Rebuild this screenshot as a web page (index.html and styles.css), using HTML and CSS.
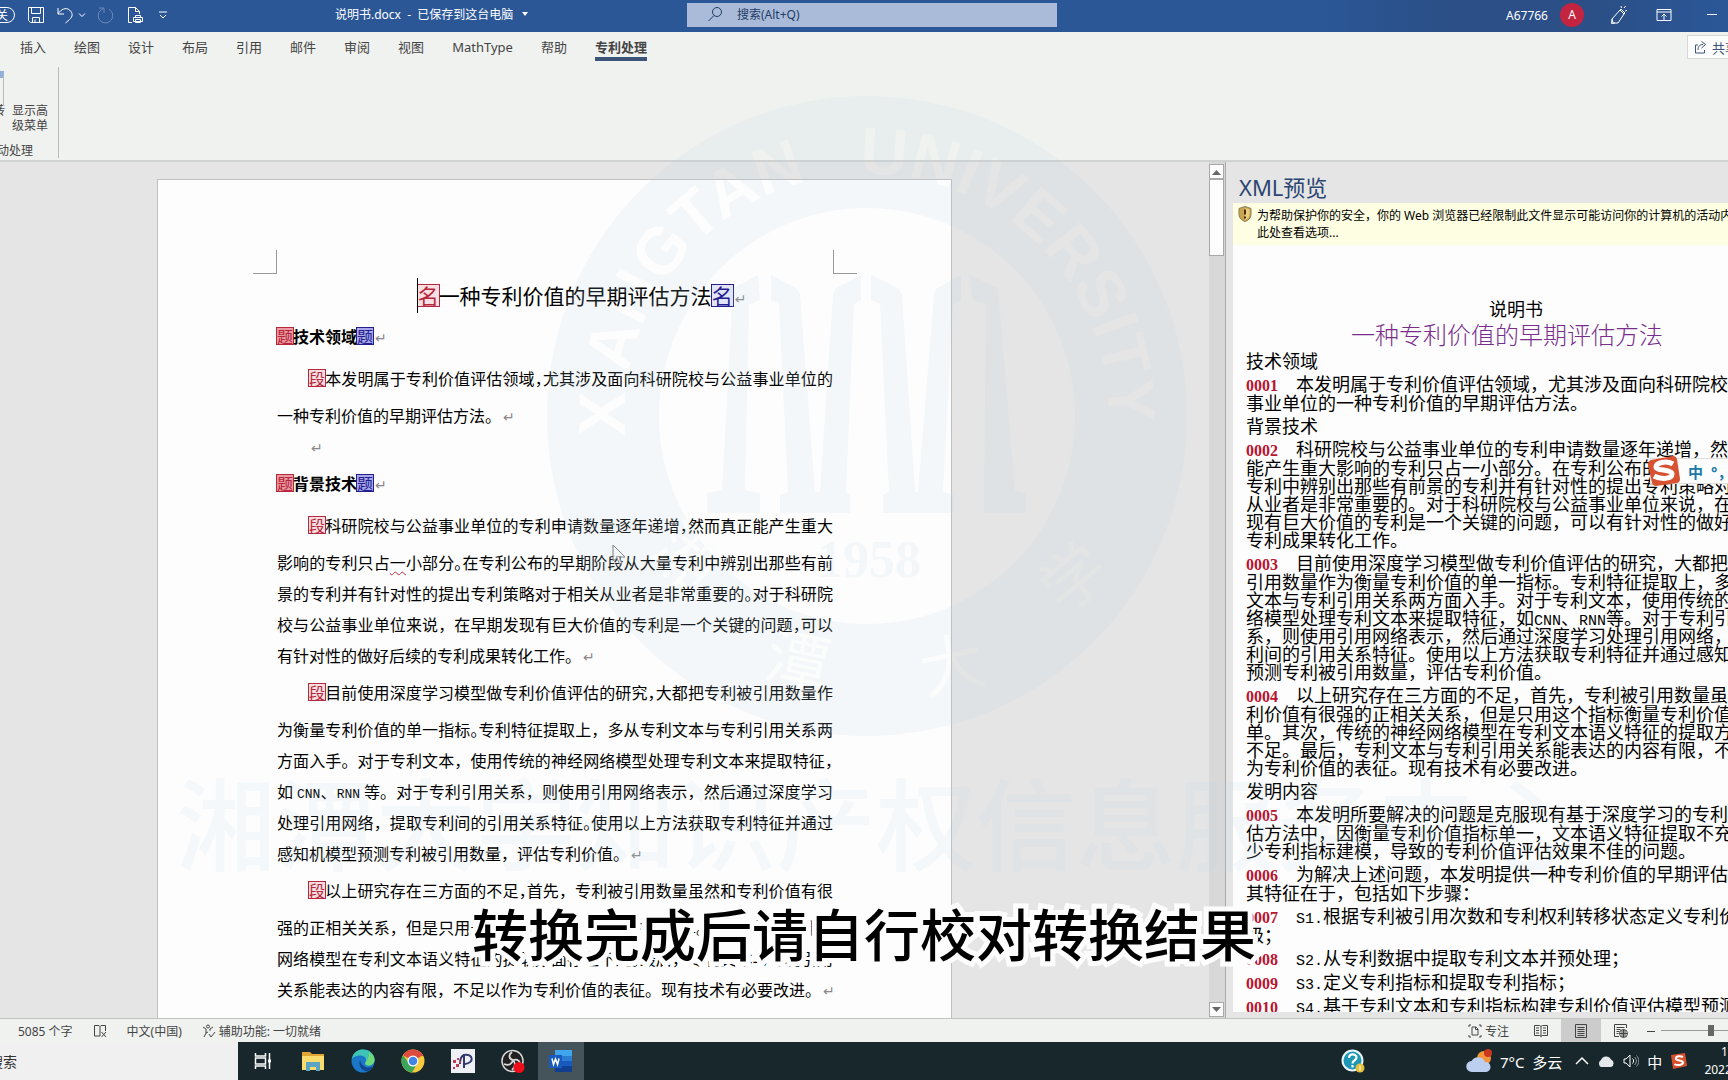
FILE: index.html
```
<!DOCTYPE html>
<html lang="zh-CN">
<head>
    <meta charset="UTF-8">
    <meta name="viewport" content="width=device-width, initial-scale=1">
    <title>说明书.docx - Word</title>
    <link rel="stylesheet" href="styles.css">
</head>
<body>
    <header class="titlebar">
        <div class="quick">
            <button class="autosave">关</button>
            <button aria-label="保存"><svg width="18" height="18" viewBox="0 0 18 18"><path d="M1.5 1.5h15v15h-13l-2-2zM4.500 1.500v6h9v-6M5.500 16.500v-5h7v5M8 16.500v-3"/></svg></button>
            <button class="undo" aria-label="撤消"><svg width="18" height="18" viewBox="0 0 18 18"><path d="M2 2v6h6M2 8c3-5 8-7 11.500-4s3.500 6.500 0 9.500l-4 3.500"/></svg></button>
            <button class="caret" aria-label="撤消列表"><svg width="8" height="8" viewBox="0 0 8 8"><path d="M1 2.500l3 3 3-3"/></svg></button>
            <button class="redo" aria-label="重复"><svg width="18" height="18" viewBox="0 0 18 18"><path d="M3 2h5v5M7.500 2.500C1 5 .5 13 6 16s12-2 10.500-8c-.5-2-1.500-3.500-3.500-5"/></svg></button>
            <button aria-label="打印预览"><svg width="18" height="18" viewBox="0 0 18 18"><path d="M6 16.500H2.500v-15h7l4 4V8M9.500 1.500v4h4M7.500 11.500h9v4h-9zM9.500 11.500v-2h5v2M9.500 13.500h5v3h-5z"/></svg></button>
            <button class="more" aria-label="自定义快速访问工具栏"><svg width="10" height="10" viewBox="0 0 10 10"><path d="M1 2h8M2 5l3 3 3-3"/></svg></button>
        </div>
        <div class="doc-name">说明书.docx&nbsp; -&nbsp; 已保存到这台电脑 <svg width="8" height="6" viewBox="0 0 8 6"><path class="solid" d="M1 1h6L4 5z"/></svg></div>
        <label class="search">
            <svg width="16" height="16" viewBox="0 0 16 16"><circle cx="10" cy="6" r="4.500"/><path d="M7 9.500L1.500 15"/></svg>
            <input type="text" placeholder="搜索(Alt+Q)" aria-label="搜索">
        </label>
        <div class="account">
            <span>A67766</span>
            <span class="avatar">A</span>
            <button aria-label="墨迹"><svg width="18" height="20" viewBox="0 0 18 20"><path d="M2 14L10 5l4 4-6 9H3zM2 14l-.5 4.500L5 18M10 5l1-1 4 4-1 1M11 1l.5 2M14 3l1.500-2M15 6l2-.5"/></svg></button>
            <button aria-label="功能区显示选项"><svg width="16" height="14" viewBox="0 0 16 14"><path d="M1 1.500h14v11H1zM1 4h14M8 12V6.500M5.500 8.500L8 6l2.500 2.500"/></svg></button>
            <button aria-label="最小化"><svg width="12" height="12" viewBox="0 0 12 12"><path d="M1 5.500h10"/></svg></button>
        </div>
    </header>

    <section class="ribbon">
        <nav class="tabs">
            <button>插入</button>
            <button>绘图</button>
            <button>设计</button>
            <button>布局</button>
            <button>引用</button>
            <button>邮件</button>
            <button>审阅</button>
            <button>视图</button>
            <button>MathType</button>
            <button>帮助</button>
            <button class="active">专利处理</button>
            <button class="share"><svg width="14" height="14" viewBox="0 0 14 14"><path d="M4 5H1.500v8h9v-3M4 10c0-4 2-5.500 5-5.500M7.500 1.500l4 3-4 3.500"/></svg>共享</button>
        </nav>
        <div class="group">
            <div class="group-buttons">
                <button class="cut">一键转<br>换…</button>
                <button>显示高<br>级菜单</button>
            </div>
            <div class="group-name">自动处理</div>
        </div>
    </section>

    <main class="workspace">
        <div class="canvas">
            <article class="page">
                <i class="corner left"></i><i class="corner right"></i>
                <h1><span class="tag open">名</span>一种专利价值的早期评估方法<span class="tag close">名</span><span class="ret">↵</span></h1>
                <h2><span class="tag open fill">题</span>技术领域<span class="tag close fill">题</span><span class="ret">↵</span></h2>
                <p>
                    <span><b class="tag open">段</b>本发明属于专利价值评估领域<i>，</i>尤其涉及面向科研院校与公益事业单位的</span>
                    <span>一种专利价值的早期评估方法。<b class="ret">↵</b></span>
                </p>
                <p class="empty"><b class="ret">↵</b></p>
                <h2><span class="tag open fill">题</span>背景技术<span class="tag close fill">题</span><span class="ret">↵</span></h2>
                <p>
                    <span><b class="tag open">段</b>科研院校与公益事业单位的专利申请数量逐年递增<i>，</i>然而真正能产生重大</span>
                    <span>影响的专利只占<u>一</u>小部分<i>。</i>在专利公布的早期阶段从大量专利中辨别出那些有前</span>
                    <span>景的专利并有针对性的提出专利策略对于相关从业者是非常重要的<i>。</i>对于科研院</span>
                    <span>校与公益事业单位来说，在早期发现有巨大价值的专利是一个关键的问题<i>，</i>可以</span>
                    <span>有针对性的做好后续的专利成果转化工作。<b class="ret">↵</b></span>
                </p>
                <p>
                    <span><b class="tag open">段</b>目前使用深度学习模型做专利价值评估的研究<i>，</i>大都把专利被引用数量作</span>
                    <span>为衡量专利价值的单一指标<i>。</i>专利特征提取上，多从专利文本与专利引用关系两</span>
                    <span>方面入手。对于专利文本，使用传统的神经网络模型处理专利文本来提取特征<i>，</i></span>
                    <span>如 <em>CNN</em>、<em>RNN</em> 等。对于专利引用关系，则使用引用网络表示，然后通过深度学习</span>
                    <span>处理引用网络，提取专利间的引用关系特征<i>。</i>使用以上方法获取专利特征并通过</span>
                    <span>感知机模型预测专利被引用数量，评估专利价值。<b class="ret">↵</b></span>
                </p>
                <p>
                    <span><b class="tag open">段</b>以上研究存在三方面的不足<i>，</i>首先，专利被引用数量虽然和专利价值有很</span>
                    <span>强的正相关关系，但是只用这个指标衡量专利价值过于简单<i>。</i>其次，传统的神经</span>
                    <span>网络模型在专利文本语义特征的提取方面存在不足<i>。</i>最后，专利文本与专利引用</span>
                    <span>关系能表达的内容有限，不足以作为专利价值的表征。现有技术有必要改进。<b class="ret">↵</b></span>
                </p>
                <p class="empty"><b class="ret">↵</b></p>
            </article>
        </div>
        <div class="scrollbar">
            <button aria-label="向上滚动"><svg width="9" height="6" viewBox="0 0 9 6"><path d="M0 6l4.500-5L9 6z"/></svg></button>
            <div class="thumb"></div>
            <button class="down" aria-label="向下滚动"><svg width="9" height="6" viewBox="0 0 9 6"><path d="M0 0l4.500 5L9 0z"/></svg></button>
        </div>
        <aside class="preview">
            <h2>XML预览</h2>
            <div class="preview-box">
                <div class="warning">
                    <svg width="14" height="16" viewBox="0 0 14 16"><path d="M7 .5l6 2v6c0 3.500-3 6-6 7-3-1-6-3.500-6-7v-6z" fill="#c9a552" stroke="#8b7a55"/><path d="M7 2l4.500 1.500V8c0 3-2 5-4.500 6z" fill="#e9cf7c"/><path d="M7 3.500v5M7 10.500v2" stroke="#4a2c0c" stroke-width="2"/></svg>
                    <div>为帮助保护你的安全，你的 Web 浏览器已经限制此文件显示可能访问你的计算机的活动内容。单击<br>此处查看选项...</div>
                </div>
                <div class="xml">
                    <h3>说明书</h3>
                    <h4>一种专利价值的早期评估方法</h4>
                    <h5>技术领域</h5>
                    <p><b>0001</b>　本发明属于专利价值评估领域，尤其涉及面向科研院校与公益<br>事业单位的一种专利价值的早期评估方法。</p>
                    <h5>背景技术</h5>
                    <p><b>0002</b>　科研院校与公益事业单位的专利申请数量逐年递增，然而真正<br>能产生重大影响的专利只占一小部分。在专利公布的早期阶段从大量<br>专利中辨别出那些有前景的专利并有针对性的提出专利策略对于相关<br>从业者是非常重要的。对于科研院校与公益事业单位来说，在早期发<br>现有巨大价值的专利是一个关键的问题，可以有针对性的做好后续的<br>专利成果转化工作。</p>
                    <p><b>0003</b>　目前使用深度学习模型做专利价值评估的研究，大都把专利被<br>引用数量作为衡量专利价值的单一指标。专利特征提取上，多从专利<br>文本与专利引用关系两方面入手。对于专利文本，使用传统的神经网<br>络模型处理专利文本来提取特征，如<em>CNN</em>、<em>RNN</em>等。对于专利引用关<br>系，则使用引用网络表示，然后通过深度学习处理引用网络，提取专<br>利间的引用关系特征。使用以上方法获取专利特征并通过感知机模型<br>预测专利被引用数量，评估专利价值。</p>
                    <p><b>0004</b>　以上研究存在三方面的不足，首先，专利被引用数量虽然和专<br>利价值有很强的正相关关系，但是只用这个指标衡量专利价值过于简<br>单。其次，传统的神经网络模型在专利文本语义特征的提取方面存在<br>不足。最后，专利文本与专利引用关系能表达的内容有限，不足以作<br>为专利价值的表征。现有技术有必要改进。</p>
                    <h5>发明内容</h5>
                    <p><b>0005</b>　本发明所要解决的问题是克服现有基于深度学习的专利价值评<br>估方法中，因衡量专利价值指标单一，文本语义特征提取不充分，缺<br>少专利指标建模，导致的专利价值评估效果不佳的问题。</p>
                    <p><b>0006</b>　为解决上述问题，本发明提供一种专利价值的早期评估方法，<br>其特征在于，包括如下步骤：</p>
                    <p><b>0007</b>　<em>S1.</em>根据专利被引用次数和专利权利转移状态定义专利价值等<br>级；</p>
                    <p><b>0008</b>　<em>S2.</em>从专利数据中提取专利文本并预处理；</p>
                    <p><b>0009</b>　<em>S3.</em>定义专利指标和提取专利指标；</p>
                    <p><b>0010</b>　<em>S4.</em>基于专利文本和专利指标构建专利价值评估模型预测</p>
                </div>
            </div>
        </aside>
    </main>

    <footer class="status">
        <span>5085 个字</span>
        <button aria-label="校对"><svg width="14" height="14" viewBox="0 0 14 14"><path d="M7 12H1.500V1.500H6l1 1 1-1h4.500V7M7 2.500V12M8.500 8l4.500 5M13 8l-4.500 5"/></svg></button>
        <span>中文(中国)</span>
        <button class="access"><svg width="14" height="14" viewBox="0 0 14 14"><circle cx="6" cy="2.500" r="1.500"/><path d="M1 3l3 2v4l-2 4M11 3L8 5v2M4 9l2-1M7 10l2 3 4-5"/></svg>辅助功能: 一切就绪</button>
        <div class="views">
            <button class="focus"><svg width="14" height="14" viewBox="0 0 14 14"><path d="M3 1H1v2M11 1h2v2M3 13H1v-2M11 13h2v-2M4 3h4l2 2v6H4zM7.500 3v2.500H10"/></svg>专注</button>
            <button aria-label="阅读视图"><svg width="14" height="14" viewBox="0 0 14 14"><path d="M7 2.500L5.500 1.500h-5v10h5l1.500 1 1.500-1h5v-10h-5zM7 2.500v10M2 4h3M2 6.500h3M2 9h3M9 4h3M9 6.500h3M9 9h3"/></svg></button>
            <button class="on" aria-label="页面视图"><svg width="12" height="14" viewBox="0 0 12 14"><path d="M.5.5h11v13H.5zM2.500 3.500h7M2.500 5.500h7M2.500 7.500h7M2.500 9.500h7M2.500 11.500h7"/></svg></button>
            <button aria-label="Web 版式视图"><svg width="14" height="14" viewBox="0 0 14 14"><path d="M5 12.500H.5V.5h12V4M2.500 3.500h8M2.500 5.500h4M2.500 7.500h3M2.500 9.500h2"/><circle cx="9.500" cy="9.500" r="4"/><path d="M5.500 9.500h8M9.500 5.500v8M8 6v7M11 6v7"/></svg></button>
            <button class="minus" aria-label="缩小"><svg width="10" height="10" viewBox="0 0 10 10"><path d="M1 5.500h8"/></svg></button>
            <input type="range" value="50" aria-label="缩放">
        </div>
    </footer>

    <div class="taskbar">
        <label class="task-search"><input type="text" placeholder="搜索" aria-label="在这里搜索"></label>
        <button aria-label="任务视图"><svg width="18" height="18" viewBox="0 0 18 18" fill="none" stroke="#fff" stroke-width="1.500"><path d="M1.500 1v3h10V1M1.500 17v-3h10v3M1.500 6h10v6h-10zM15.500 1v16"/><path d="M14 7.500h3v3h-3z" fill="#fff" stroke="none"/></svg></button>
        <button aria-label="文件资源管理器"><svg width="24" height="24" viewBox="0 0 24 24"><path d="M1 3h8l2 2h12v16H1z" fill="#e0a634"/><path d="M1 7h22v14H1z" fill="#fadc6e"/><path d="M5 22v-9h14v9h-4v-4H9v4z" fill="#5aa5c4"/></svg></button>
        <button aria-label="Edge"><svg width="24" height="24" viewBox="0 0 24 24"><circle cx="12" cy="12" r="11.500" fill="#1b78c8"/><path d="M1 10C2 3 7 .5 12 .5c7 0 11.500 5 11.500 10 0 4-3 6-6 6-3 0-4-1.500-3-3 2-4-1-7-5-7-4 0-7.500 1.500-8.500 3.500z" fill="#3fc3b4"/><path d="M18 3c4 2.500 5.500 5 5.500 8 0 3.500-3 5.500-6 5.500-3 0-4-1.500-3-3 3-4 4-7 3.500-10.500z" fill="#6fd879"/><path d="M9 11c-2 5 1 10.500 7 11.500 3-1 5-3 6-5-5 2.500-11 1-13-6.500z" fill="#12478f"/></svg></button>
        <button aria-label="Chrome"><svg width="24" height="24" viewBox="0 0 24 24"><circle cx="12" cy="12" r="11.500" fill="#f8ca3c"/><path d="M12 12L2 6.200A11.500 11.500 0 0 1 22 6.300z" fill="#dd4b3e"/><path d="M2 6.200A11.500 11.500 0 0 0 11 23.500l5.500-9.500H8z" fill="#3ba55b"/><path d="M12 6.500h10" stroke="#dd4b3e" stroke-width="1"/><circle cx="12" cy="12" r="5.500" fill="#fff"/><circle cx="12" cy="12" r="4.300" fill="#4285e4"/></svg></button>
        <button aria-label="专利工具"><svg width="24" height="24" viewBox="0 0 24 24"><path fill="#eef0f4" d="M0 0h24v24H0z"/><path d="M13 19V6c9-2 11 8 1 9M13 6c-3 1-4 5-4 9" fill="none" stroke="#343a70" stroke-width="2"/><path d="M2 11h3v3H2zM6 9h2v2H6zM5 15h3v3H5zM2 18h2v2H2zM8 12h2v2H8z" fill="#c33a58"/></svg></button>
        <button aria-label="OBS"><svg width="24" height="24" viewBox="0 0 24 24"><circle cx="11.500" cy="12" r="10.500" fill="#211f21" stroke="#d8d8d8" stroke-width="1.500"/><path d="M11 3c-4 3-3 7 1 8 3-1 6-.5 7 3M12 11c-1 4-4 6-9 4M12 11c3 3 2 7-1 10" fill="none" stroke="#d8d8d8" stroke-width="1.800"/><circle cx="18" cy="18.500" r="5.500" fill="#f00d18"/></svg></button>
        <button class="running" aria-label="Word"><svg width="24" height="24" viewBox="0 0 24 24"><path fill="#41a5ee" d="M6 1h17v6H6z"/><path fill="#2b7cd3" d="M6 7h17v6H6z"/><path fill="#185abd" d="M6 12h17v6H6z"/><path fill="#103f91" d="M6 17h17v6H6z"/><path fill="#185abd" d="M0 6h13v13H0z"/><path d="M3 9.500l1.500 6L6.500 10l2 5.500 1.500-6" fill="none" stroke="#fff" stroke-width="1.500"/></svg></button>
        <div class="tray">
            <button class="help" aria-label="帮助"><svg width="24" height="24" viewBox="0 0 24 24"><circle cx="11.500" cy="11.500" r="10" fill="#1d97b5" stroke="#e8f6fa" stroke-width="2"/><path d="M8 9c0-5 7.500-4.500 7.500-.5 0 3-4 2.500-4 6M11.500 16v2.500" fill="none" stroke="#fff" stroke-width="2.200"/><circle cx="19" cy="19" r="4.500" fill="#e5c03f"/><path d="M19 16.500v5" stroke="#fff"/></svg></button>
            <svg width="26" height="24" viewBox="0 0 26 24"><circle cx="18" cy="9" r="7" fill="#f3963c"/><circle cx="22" cy="4" r="4" fill="#c9371f"/><path d="M6 23a5.500 5.500 0 0 1-.5-11A7.500 7.500 0 0 1 19 13a5 5 0 0 1 1 10z" fill="#bccff0"/></svg>
            <span class="weather">7°C&nbsp; 多云</span>
            <svg width="14" height="14" viewBox="0 0 14 14" fill="none" stroke="#fff" stroke-width="1.500"><path d="M1 10l6-6 6 6"/></svg>
            <svg width="18" height="14" viewBox="0 0 18 14"><path d="M4 13a4 4 0 0 1 0-7 5.500 5.500 0 0 1 10-.5A4 4 0 0 1 14 13z" fill="#e4e8ea"/></svg>
            <svg width="16" height="14" viewBox="0 0 16 14" fill="none" stroke="#fff"><path d="M1 5h2l4-4v12L3 9H1zM9.500 4.500c1.500 1.500 1.500 3.500 0 5"/><path d="M11.500 3c2.500 2.500 2.500 5.500 0 8M13.500 1.500c3 3 3 8 0 11" stroke="#8b989c"/></svg>
            <span>中</span>
            <svg width="18" height="16" viewBox="0 0 18 16"><path d="M1 2l14-2 2 13-14 3z" fill="#d9502c"/><path d="M13 4C9 2 5 4 6 6s7 1 7 3.500S7 13 4.500 11" fill="none" stroke="#fff" stroke-width="2"/></svg>
            <div class="clock">17:36<br>2022/11/30</div>
        </div>
    </div>

    <!-- input method bar -->
    <div class="ime">
        <svg width="32" height="30" viewBox="0 0 32 30"><path d="M3 4L25 0q3 0 4 3l3 20q0 3-3 4L8 30q-3 0-4-3L0 8q0-3 3-4z" fill="#d65231"/><path d="M25 8C18 4 8 7 8 11s16 2 16 7-11 6-18 2" fill="none" stroke="#fff" stroke-width="5"/></svg>
        <span>中</span><span>°，</span>
    </div>

    <svg class="pointer" width="14" height="22" viewBox="0 0 14 22"><path d="M1 1v16l4-3 2.500 6 2.500-1-2.500-6H13z" fill="#fff" fill-opacity=".6" stroke="#777"/></svg>

    <!-- university watermark -->
    <svg class="seal" width="640" height="640" viewBox="547 96 640 640" aria-hidden="true">
        <defs>
            <path id="arc" d="M867 658a242 242 0 0 1 0-484a242 242 0 0 1 0 484"/>
            <mask id="letters" maskUnits="userSpaceOnUse" x="547" y="96" width="640" height="640">
                <path fill="#fff" d="M547 96h640v640H547z"/>
                <circle cx="867" cy="416" r="208" fill="#000"/>
                <g class="seal-name">
                    <text><textPath href="#arc" startOffset="530">XIANGTAN</textPath></text>
                    <text><textPath href="#arc" startOffset="950">UNIVERSITY</textPath></text>
                </g>
                <g class="seal-cn">
                    <text transform="translate(683 560) rotate(40)" y="20">湘</text>
                    <text transform="translate(797 664) rotate(12)" y="20">潭</text>
                    <text transform="translate(953 668) rotate(-12)" y="20">大</text>
                    <text transform="translate(1076 580) rotate(-40)" y="20">学</text>
                </g>
            </mask>
        </defs>
        <circle cx="867" cy="416" r="320" mask="url(#letters)"/>
        <path d="M758 275L733 288 722 490 707 493V513H760V493L745 490 749 305 760 300zM771 275L796 288 800 294 815 492H820L833 294 836 288 861 275V300L854 304 846 492 850 495V513H780V495L788 492 779 304 771 300zM871 275L898 288 902 294 915 492H918L934 294 937 288 961 275V300L953 304 943 492 954 495V513H883V495L889 492 880 304 871 300zM969 275L998 288 1015 491 1026 493V513H984V493L986 304 973 300z"/>
        <text class="seal-year" x="869" y="577">1958</text>
    </svg>
    <div class="watermark">湘潭大学知识产权信息服务中心</div>
    <div class="subtitle">转换完成后请自行校对转换结果</div>
</body>
</html>
```
FILE: styles.css
```
* {
    box-sizing: border-box;
}

body {
    margin: 0;
    height: 100vh;
    display: flex;
    flex-direction: column;
    overflow: hidden;
    position: relative;
    background: #e5e5e5;
    font-family: "Noto Sans", "Noto Sans CJK SC", sans-serif;
    font-size: 12px;
    color: #444;
}

button {
    display: flex;
    align-items: center;
    padding: 0;
    border: none;
    background: none;
    font: inherit;
    color: inherit;
    flex-shrink: 0;
}

input {
    font: inherit;
    border: none;
    background: none;
    padding: 0;
    margin: 0;
}

svg {
    display: block;
    flex-shrink: 0;
}

h1, h2, h3, h4, h5, p {
    margin: 0;
    font-weight: 400;
}

/* title bar */
.titlebar {
    height: 32px;
    display: flex;
    align-items: center;
    flex-shrink: 0;
    background: linear-gradient(90deg, #2b5797 76%, #2b4f86 84%, #2b4f86 92%, #2b5797);
    color: #fff;
    white-space: nowrap;
}

.titlebar svg,
.tabs svg,
.status svg {
    fill: none;
    stroke: currentColor;
}

.titlebar svg .solid {
    fill: currentColor;
    stroke: none;
}

.quick {
    display: flex;
    align-items: center;
    width: 335px;
    height: 30px;
    padding-bottom: 2px;
}

.quick button {
    margin-right: 14px;
}

.quick .autosave {
    width: 40px;
    height: 16px;
    margin-left: -25px;
    margin-right: 12px;
    padding-right: 6px;
    justify-content: flex-end;
    border: 1px solid #fff;
    border-radius: 8px;
}

.quick .undo {
    margin-right: 4px;
    margin-left: -3px;
}

.quick .caret {
    margin-right: 10px;
}

.quick .redo {
    margin-right: 12px;
    opacity: .3;
}

.doc-name {
    display: flex;
    align-items: center;
    gap: 8px;
    width: 352px;
    height: 30px;
    padding-bottom: 4px;
}

.search {
    display: flex;
    align-items: center;
    gap: 14px;
    flex: 0 1 370px;
    height: 24px;
    margin-bottom: 2px;
    padding: 0 0 2px 20px;
    background: #a9bbd8;
    color: #1f3c66;
}

.search input {
    flex: 1;
}

.search input::placeholder {
    color: #1f3c66;
}

.account {
    display: flex;
    align-items: center;
    margin-left: auto;
    padding: 0 10px 2px 0;
    height: 30px;
}

.avatar {
    width: 24px;
    height: 24px;
    margin: 0 26px 0 12px;
    border-radius: 50%;
    background: #c4243f;
    text-align: center;
    line-height: 24px;
}

.account button + button {
    margin-left: 28px;
}

.account button:last-child {
    margin-left: 34px;
}

/* ribbon */
.ribbon {
    height: 130px;
    flex-shrink: 0;
    background: #f0f2f0;
    border-bottom: 2px solid #d0d1d1;
    overflow: hidden;
}

.tabs {
    display: flex;
    gap: 28px;
    height: 29px;
    padding-left: 20px;
    font-size: 13px;
    white-space: nowrap;
}

.tabs .active {
    font-weight: 700;
    border-bottom: 4px solid #3b5478;
    padding-top: 4px;
}

.tabs .share {
    gap: 4px;
    width: 60px;
    height: 24px;
    margin: 3px -19px 0 auto;
    padding-left: 6px;
    border: 1px solid #d6d8d8;
    background: #fdfdfd;
    color: #3b5478;
}

.group {
    position: relative;
    width: 59px;
    height: 91px;
    margin-top: 6px;
    padding-top: 36px;
    border-right: 1px solid #b9bbbb;
}

.group::before {
    content: "";
    position: absolute;
    left: 0;
    top: 4px;
    width: 3px;
    height: 28px;
    border-top: 7px solid #8fb0d8;
    border-right: 1px solid #b9bbbb;
}

.group-buttons {
    display: flex;
    gap: 7px;
    margin-left: -31px;
    line-height: 15px;
}

.group-buttons button {
    white-space: nowrap;
}

.group-name {
    margin: 8px 0 0 -15px;
    line-height: 20px;
    white-space: nowrap;
}

/* workspace */
.workspace {
    flex: 1;
    display: flex;
    min-height: 0;
    border-bottom: 1px solid #c2c2c2;
}

.canvas {
    flex: 1;
    padding: 17px 0 0 157px;
    overflow: hidden;
}

.page {
    position: relative;
    width: 795px;
    height: 1123px;
    padding: 96px 118px 0 119px;
    border: 1px solid #c0c0c0;
    background: #fdfdfd;
    color: #000;
    font-family: "Noto Sans CJK SC", sans-serif;
    font-weight: 300;
    font-size: 16px;
}

.page h1 {
    padding-left: 54px;
    font-size: 21px;
    line-height: 39px;
    text-align: center;
}

.page h2 {
    font-size: 16px;
    line-height: 42px;
    font-weight: 700;
}

.page p > span {
    display: block;
    line-height: 31px;
    white-space: nowrap;
    text-align-last: justify;
}

.page p > span:first-child {
    line-height: 43px;
    padding-left: 32px;
}

.page p > span:last-child {
    text-align-last: left;
}

.page .empty {
    padding-left: 32px;
    line-height: 31px;
}

/* half-width punctuation */
.page i {
    font-style: normal;
    font-feature-settings: "halt";
}

.page u {
    text-decoration: underline wavy #c0283c 1px;
    text-underline-offset: 2px;
}

.page em,
.xml em {
    font-style: normal;
    font-family: "Liberation Mono", monospace;
    font-size: 13px;
    line-height: 0;
}

.page .tag {
    display: inline-block;
    font-weight: 400;
    line-height: 1;
    outline: 1px solid;
    text-align-last: left;
}

.tag.open {
    color: #b5273c;
    background: #f8dfe2;
}

.tag.close {
    color: #241f8f;
    background: #e4e4f7;
}

.tag.open.fill {
    background: #eb9aa2;
}

.tag.close.fill {
    background: #a9a8ea;
}

/* text cursor in front of the first tag */
.page h1 .tag.open::before {
    content: "";
    position: absolute;
    width: 1px;
    height: 35px;
    margin: -7px 0 0 -1px;
    background: #000;
}

.ret {
    padding-left: 2px;
    font-family: "DejaVu Sans", sans-serif;
    font-weight: 400;
    font-size: 14px;
    line-height: 0;
    color: #888;
}

.corner {
    position: absolute;
    top: 70px;
    width: 24px;
    height: 24px;
    border-bottom: 1px solid #999;
}

.corner.left {
    left: 95px;
    border-right: 1px solid #999;
}

.corner.right {
    right: 94px;
    border-left: 1px solid #999;
}

.scrollbar {
    display: flex;
    flex-direction: column;
    width: 17px;
    padding: 2px 1px 1px 0;
    border-right: 1px solid #aaa;
    background: #d8d8d8;
}

.scrollbar button {
    justify-content: center;
    height: 15px;
    border: 1px solid #a8a8a8;
    background: #fdfdfd;
    fill: #666;
}

.scrollbar .thumb {
    height: 77px;
    border: 1px solid #a8a8a8;
    background: #fdfdfd;
}

.scrollbar .down {
    margin-top: auto;
}

/* xml preview */
.preview {
    display: flex;
    flex-direction: column;
    width: 502px;
    padding: 10px 0 6px 7px;
    overflow: hidden;
}

.preview > h2 {
    padding-left: 6px;
    font-size: 22px;
    line-height: 31px;
    color: #2c4674;
}

.preview-box {
    flex: 1;
    min-height: 0;
    overflow: hidden;
    background: #fdfdfd;
    color: #000;
    white-space: nowrap;
}

.warning {
    display: flex;
    gap: 5px;
    height: 42px;
    padding: 3px 0 0 5px;
    background: #fefee2;
    line-height: 17px;
}

.warning > div {
    padding-top: 1px;
}

.xml {
    width: 566px;
    padding: 51px 13px 0;
    font-family: "Noto Sans CJK SC", sans-serif;
    font-size: 18px;
    font-weight: 300;
    line-height: 18px;
}

.xml h3 {
    font-size: 18px;
    line-height: 24px;
    text-align: center;
}

.xml h4 {
    padding-right: 18px;
    font-size: 24px;
    font-weight: 300;
    line-height: 28px;
    text-align: center;
    color: #7a2d8c;
}

.xml h5 {
    font-size: 18px;
    line-height: 25px;
}

.xml p + h5 {
    margin-top: 2px;
}

.xml p::first-line {
    line-height: 20px;
}

.xml p + p {
    margin-top: 4px;
}

.xml b {
    font-family: "Liberation Serif", serif;
    font-size: 16px;
    line-height: 0;
    color: #b8142f;
}

.xml em {
    font-size: 15px;
}

/* status bar */
.status {
    display: flex;
    align-items: center;
    flex-shrink: 0;
    height: 23px;
    padding-left: 18px;
    background: #f0f2f0;
    gap: 20px;
    white-space: nowrap;
}

.access {
    gap: 3px;
}

.views {
    display: flex;
    align-items: center;
    align-self: stretch;
    width: 260px;
    margin-left: auto;
}

.views button {
    justify-content: center;
    width: 40px;
    height: 100%;
}

.views .focus {
    gap: 3px;
    width: 41px;
    margin-right: 12px;
}

.views .on {
    background: #cdcccc;
}

.views .minus {
    width: 10px;
    margin: 0 5px;
}

.views input {
    flex: 0 0 100px;
    width: 100px;
    min-width: 0;
    appearance: none;
    height: 1px;
    background: #999;
}

.views input::-webkit-slider-thumb {
    appearance: none;
    width: 6px;
    height: 11px;
    background: #666;
}

/* windows taskbar */
.taskbar {
    display: flex;
    flex-shrink: 0;
    height: 38px;
    background: #17272b;
    color: #fff;
    white-space: nowrap;
}

.task-search {
    display: flex;
    width: 238px;
    background: #f0f0f0;
    font-size: 14px;
}

.task-search input {
    flex: 1;
    margin-left: -11px;
}

.task-search input::placeholder {
    color: #333;
}

.taskbar > button {
    justify-content: center;
    width: 50px;
}

.taskbar .running {
    width: 46px;
    background: #44545a;
}

.tray {
    display: flex;
    align-items: center;
    gap: 8px;
    width: 387px;
    margin-left: auto;
    font-size: 15px;
}

.help {
    margin-right: 93px;
}

.weather {
    margin-right: 5px;
}

.clock {
    width: 80px;
    flex-shrink: 0;
    font-size: 12px;
    line-height: 18px;
    text-align: center;
}

/* overlays */
.ime {
    position: absolute;
    top: 458px;
    right: 0;
    display: flex;
    align-items: center;
    gap: 8px;
    width: 78px;
    height: 26px;
    background: #fdfdfd;
    border: 1px solid #ddd;
    border-right: none;
    font-size: 15px;
    font-weight: 700;
    color: #1b7aa8;
    white-space: nowrap;
}

.ime svg {
    margin-left: -3px;
}

.pointer {
    position: absolute;
    left: 612px;
    top: 544px;
}

.seal {
    position: absolute;
    left: 547px;
    top: 96px;
    fill: rgba(181, 213, 229, .14);
    pointer-events: none;
}

.seal-name {
    font-family: "Liberation Sans", sans-serif;
    font-size: 66px;
    font-weight: 700;
    text-anchor: middle;
    fill: #000;
}

.seal-cn {
    font-family: "Noto Sans CJK SC", sans-serif;
    font-size: 64px;
    text-anchor: middle;
    fill: #333;
}

.seal-year {
    font-family: "Liberation Serif", serif;
    font-size: 52px;
    font-weight: 700;
    text-anchor: middle;
}

.watermark {
    position: absolute;
    left: 24px;
    right: 0;
    top: 770px;
    font-family: "Noto Sans CJK SC", sans-serif;
    font-size: 100px;
    font-weight: 500;
    line-height: 100px;
    text-align: center;
    white-space: nowrap;
    color: rgba(181, 213, 229, .12);
    pointer-events: none;
}

.subtitle {
    position: absolute;
    left: 0;
    right: 0;
    top: 904px;
    font-family: "Noto Sans CJK SC", sans-serif;
    font-size: 56px;
    font-weight: 500;
    line-height: 56px;
    text-align: center;
    white-space: nowrap;
    color: #000;
    -webkit-text-stroke: 10px #fdfdfd;
    paint-order: stroke fill;
    pointer-events: none;
}
```
